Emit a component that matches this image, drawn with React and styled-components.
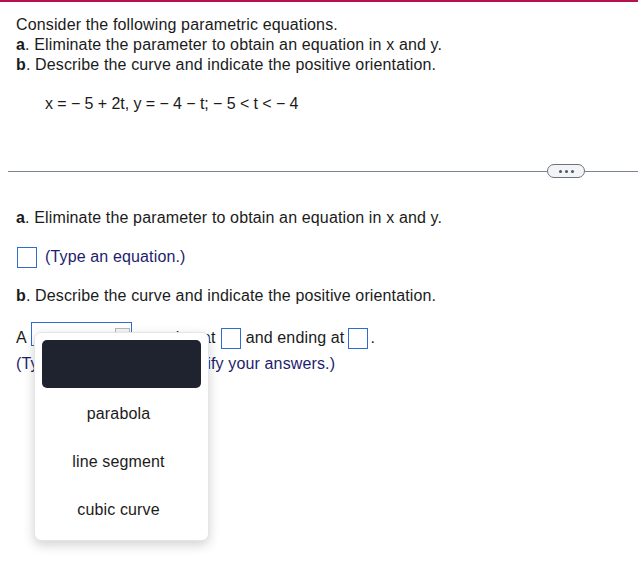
import React from 'react'
import styled, { createGlobalStyle } from 'styled-components'

const Global = createGlobalStyle`
	body {
		margin: 0;
		background: #fff;
		font-family: 'Liberation Sans', Arial, sans-serif;
		font-size: 16px;
		letter-spacing: 0.14px;
		color: #1b1b1b;
	}
`

const Page = styled.div`
	width: 638px;
	height: 568px;
	overflow: hidden;
	border-top: 2px solid #b5134f;
	box-sizing: border-box;
`

const Intro = styled.div`
	padding: 13px 16px 0;
	line-height: 20px;
`

const Bold = styled.b`
	font-weight: 700;
`

const Equation = styled.div`
	padding: 19px 0 0 29px;
	line-height: 20px;
	letter-spacing: 0;
	word-spacing: -0.15px;
`

const Divider = styled.div`
	display: flex;
	align-items: center;
	margin: 50px 0 0 8px;
	height: 14px;
`

const Rule = styled.div`
	height: 1px;
	background: #7c8595;
	flex: ${p => (p.$grow ? 1 : 'none')};
	width: ${p => p.$w || 'auto'};
`

const Pill = styled.div`
	width: 36px;
	height: 12px;
	border: 1px solid #6b7280;
	border-radius: 7px;
	background: #f3f4f6;
	display: flex;
	align-items: center;
	justify-content: center;
	gap: 3px;
`

const Dot = styled.span`
	width: 3px;
	height: 3px;
	background: #4b5563;
	border-radius: 50%;
`

const Section = styled.div`
	padding: 0 16px;
	line-height: 20px;
`

const Heading = styled.div`
	margin-top: ${p => p.$top}px;
`

const AnswerLine = styled.div`
	display: flex;
	align-items: center;
	margin-top: ${p => p.$top}px;
	height: 22px;
	position: relative;
`

const Box = styled.span`
	display: inline-block;
	width: 18px;
	height: 19px;
	border: 1px solid #2f6bd1;
	margin: ${p => p.$m || '0'};
`

const Hint = styled.span`
	color: #1d1d6e;
`

const Select = styled.span`
	display: inline-flex;
	justify-content: flex-end;
	align-items: flex-start;
	width: 101px;
	height: 24px;
	border: 1px solid #2f6bd1;
	margin: 0 12px 0 4px;
	position: relative;
	top: -4px;
	box-sizing: border-box;
	padding: 5px 1px 0 0;
`

const Caret = styled.span`
	width: 15px;
	height: 12px;
	border: 1px solid #b7b7b7;
	box-sizing: border-box;
	background: #f5f5f5;
`

const Popup = styled.div`
	position: absolute;
	left: 34px;
	top: 332px;
	width: 175px;
	height: 209px;
	box-sizing: border-box;
	background: #fff;
	border-radius: 7px;
	border: 1px solid #e5e5e5;
	box-shadow: 0 4px 12px rgba(0, 0, 0, 0.18);
	padding: 7px;
`

const Highlight = styled.div`
	height: 48px;
	background: #1f2330;
	border-radius: 5px;
`

const Option = styled.div`
	height: 48px;
	display: flex;
	align-items: center;
	justify-content: center;
	padding: 3px 6px 0 0;
	box-sizing: border-box;
	color: #1b1b1b;
`

const Wrap = styled.div`
	position: relative;
`

const App = () => {
	return (
		<Wrap>
			<Global />
			<Page>
				<Intro>
					<div>Consider the following parametric equations.</div>
					<div><Bold>a</Bold>. Eliminate the parameter to obtain an equation in x and y.</div>
					<div><Bold>b</Bold>. Describe the curve and indicate the positive orientation.</div>
					<Equation>x = − 5 + 2t, y = − 4 − t; − 5 &lt; t &lt; − 4</Equation>
				</Intro>

				<Divider>
					<Rule $grow />
					<Pill><Dot /><Dot /><Dot /></Pill>
					<Rule $w='53px' />
				</Divider>

				<Section>
					<Heading $top={30}><Bold>a</Bold>. Eliminate the parameter to obtain an equation in x and y.</Heading>
					<AnswerLine $top={18}>
						<Box $m='0 8px 0 1px' />
						<Hint>(Type an equation.)</Hint>
					</AnswerLine>
					<Heading $top={18}><Bold>b</Bold>. Describe the curve and indicate the positive orientation.</Heading>
					<AnswerLine $top={21}>
						A
						<Select><Caret /></Select>
						starting at
						<Box $m='0 5px 0 5px' />
						and ending at
						<Box $m='0 2px 0 4px' />
						.
					</AnswerLine>
					<Heading $top={5}><Hint>(Type ordered pairs. Simplify your answers.)</Hint></Heading>
				</Section>
			</Page>
			<Popup>
				<Highlight />
				<Option>parabola</Option>
				<Option>line segment</Option>
				<Option>cubic curve</Option>
			</Popup>
		</Wrap>
	)
}

export default App
